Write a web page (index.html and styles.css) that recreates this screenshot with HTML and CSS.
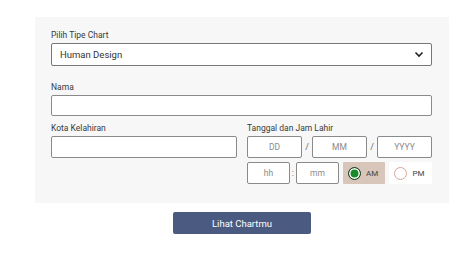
FILE: index.html
```html
<!DOCTYPE html>
<html lang="id">
<head>
    <meta charset="UTF-8">
    <title>Lihat Chart</title>
    <link rel="stylesheet" href="styles.css">
</head>
<body>
    <div class="wrap">
        <form class="panel">
            <label class="lbl">Pilih Tipe Chart</label>
            <div class="select">
                <span>Human Design</span>
                <svg width="10" height="7" viewBox="0 0 10 7"><path d="M1.5 1.5 L5 5 L8.5 1.5" fill="none" stroke="#222" stroke-width="1.6"/></svg>
            </div>

            <label class="lbl lbl-nama">Nama</label>
            <input class="field nama" type="text">

            <div class="cols">
                <div>
                    <label class="lbl">Kota Kelahiran</label>
                    <input class="field kota" type="text">
                </div>
                <div>
                    <label class="lbl">Tanggal dan Jam Lahir</label>
                    <div class="date-row">
                        <input class="field small" placeholder="DD">
                        <span class="sep">/</span>
                        <input class="field small" placeholder="MM">
                        <span class="sep">/</span>
                        <input class="field small" placeholder="YYYY">
                    </div>
                    <div class="time-row">
                        <input class="field small t" placeholder="hh">
                        <span class="sep2">:</span>
                        <input class="field small t" placeholder="mm">
                        <div class="ampm on"><span class="radio checked"></span>AM</div>
                        <div class="ampm"><span class="radio"></span>PM</div>
                    </div>
                </div>
            </div>
        </form>
        <div class="actions">
            <button type="button" class="btn">Lihat Chartmu</button>
        </div>
    </div>
</body>
</html>
```
FILE: styles.css
```css
body { margin: 0; background: #fff; font-family: Roboto, "Liberation Sans", sans-serif; color: #333; }
.wrap { width: 414px; margin-left: 35px; padding-top: 17px; }
.panel { display: block; background: #f7f7f7; padding: 13px 17px 19px 16px; height: 154px; }
.lbl { display: block; font-size: 8.5px; line-height: 10px; height: 10px; color: #3a3a3a; margin-bottom: 3px; }
.lbl-nama { margin-top: 16px; }
.select { box-sizing: border-box; height: 23px; background: #fff; border: 1px solid #777; border-radius: 2px; display: flex; align-items: center; justify-content: space-between; padding: 0 7px 0 8px; font-size: 9.5px; color: #333; }
.select svg { display: block; }
.field { box-sizing: border-box; display: block; background: #fff; border: 1px solid #8a8a8a; border-radius: 2px; margin: 0; padding: 0; font-family: inherit; outline: none; }
.nama { width: 100%; height: 21px; }
.cols { display: grid; grid-template-columns: 186px 185px; column-gap: 10px; margin-top: 7px; }
.kota { width: 100%; height: 22px; }
.date-row { display: flex; align-items: center; height: 22px; }
.date-row .small { flex: 1; width: 0; height: 22px; }
.small { text-align: center; font-size: 8.5px; color: #555; }
.small::placeholder { color: #8a8a8a; }
.sep { width: 10px; text-align: center; font-size: 9px; color: #666; }
.time-row { display: flex; align-items: center; height: 22px; margin-top: 4px; }
.time-row .t { width: 43px; height: 22px; }
.sep2 { width: 6px; text-align: center; font-size: 9px; color: #666; }
.ampm { box-sizing: border-box; width: 43px; height: 22px; margin-left: 4px; display: flex; align-items: center; gap: 5px; padding-left: 5px; font-size: 8px; color: #444; background: #fff; border-radius: 1px; }
.ampm.on { background: #d9c6ba; }
.radio { box-sizing: border-box; width: 13px; height: 13px; border-radius: 50%; border: 1px solid #d4a59a; background: #fff; }
.radio.checked { border: 1.5px solid #1e3b22; background: #1a8a2c; box-shadow: inset 0 0 0 1.5px #fff; }
.actions { width: 414px; display: flex; justify-content: center; padding-top: 9px; }
.btn { width: 138px; height: 22px; border: none; border-radius: 2px; background: #4a5a80; color: #fff; font-family: inherit; font-size: 9.5px; cursor: pointer; }
.btn:hover { background: #56678f; }
```
